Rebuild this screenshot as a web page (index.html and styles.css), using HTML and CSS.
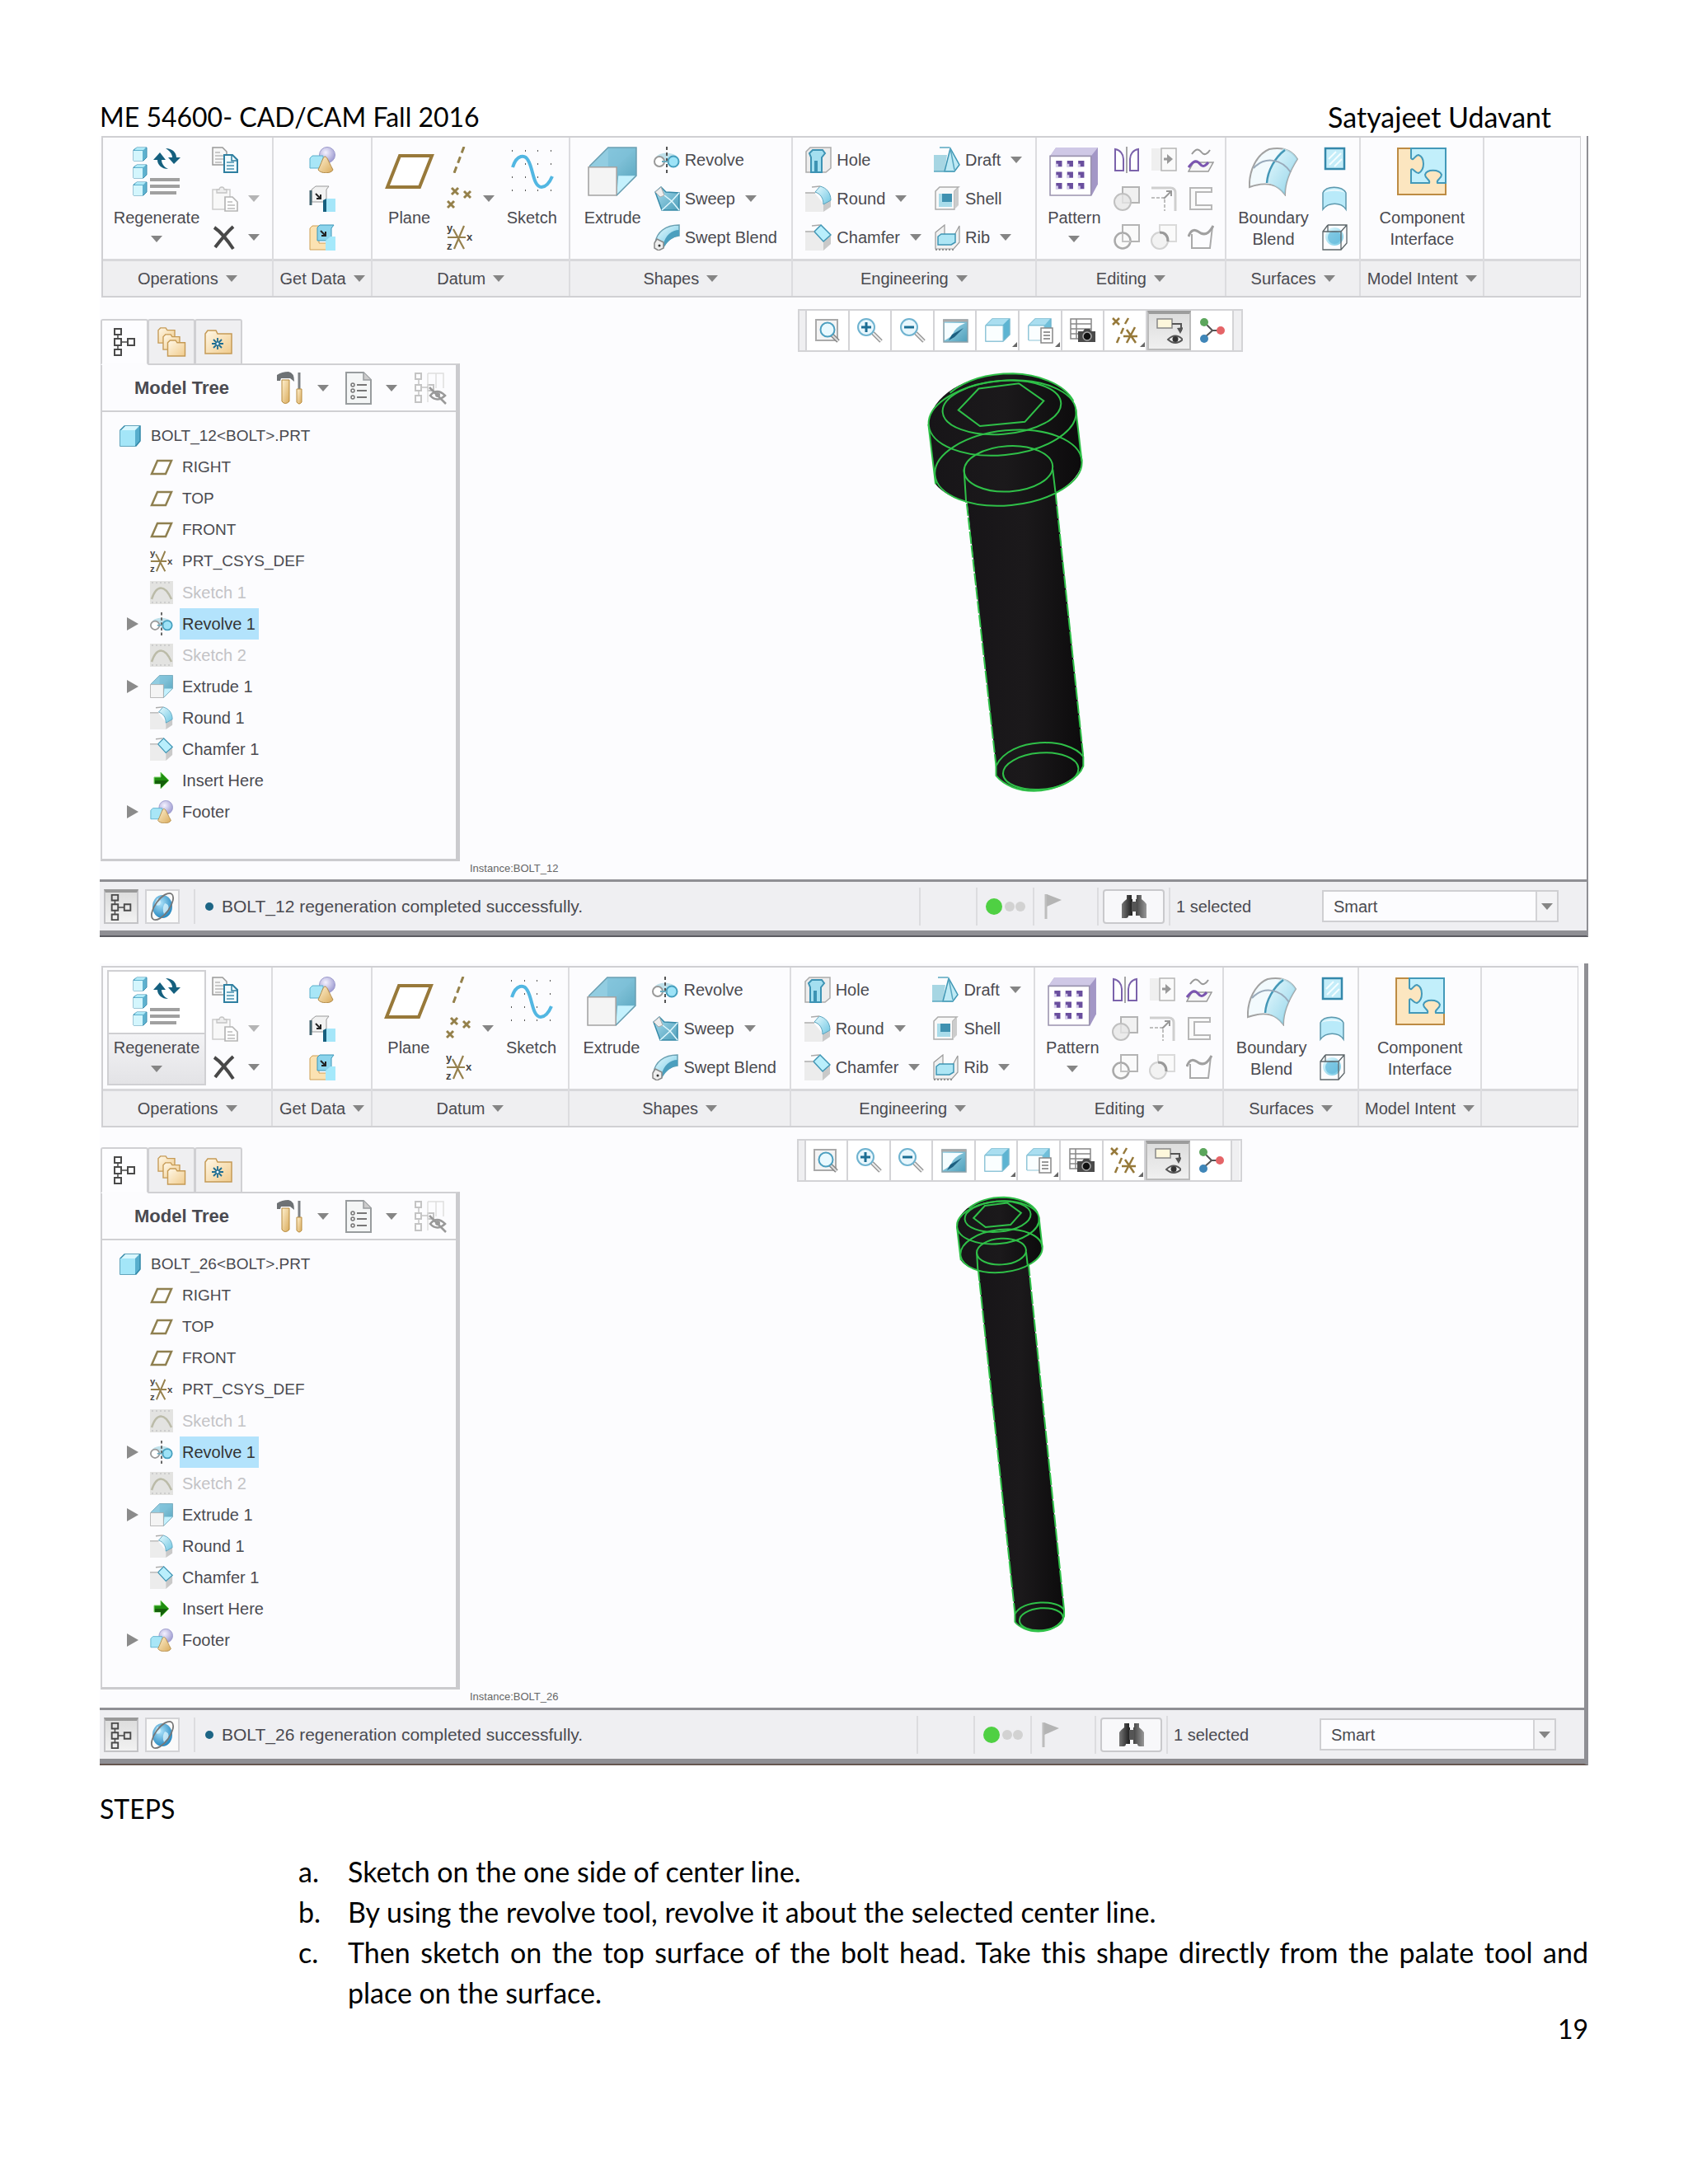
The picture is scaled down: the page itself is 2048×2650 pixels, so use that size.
FILE: index.html
```html
<!DOCTYPE html>
<html lang="en">
<head>
<meta charset="utf-8">
<title>ME 54600 - CAD/CAM Fall 2016</title>
<link rel="stylesheet" href="styles.css">
</head>
<body>
<svg class="sprite" width="0" height="0" aria-hidden="true">
  <defs>
    <linearGradient id="g-blue" x1="0" y1="0" x2="1" y2="1"><stop offset="0" stop-color="#e8fbff"/><stop offset="1" stop-color="#6fc6e2"/></linearGradient>
    <linearGradient id="g-teal" x1="0" y1="0" x2="1" y2="1"><stop offset="0" stop-color="#a9def0"/><stop offset="1" stop-color="#4f9fba"/></linearGradient>
    <linearGradient id="g-gold" x1="0" y1="0" x2="1" y2="1"><stop offset="0" stop-color="#fff0cf"/><stop offset="1" stop-color="#d9ab5c"/></linearGradient>
    <linearGradient id="g-folder" x1="0" y1="0" x2="1" y2="1"><stop offset="0" stop-color="#fff8e8"/><stop offset="1" stop-color="#f0cb8c"/></linearGradient>
    <linearGradient id="g-shaft" x1="0" y1="0" x2="1" y2="0"><stop offset="0" stop-color="#171518"/><stop offset=".5" stop-color="#1b191b"/><stop offset="1" stop-color="#0c0b0c"/></linearGradient>
    <radialGradient id="g-ball" cx=".4" cy=".35" r=".7"><stop offset="0" stop-color="#f4f2ff"/><stop offset="1" stop-color="#9a97cf"/></radialGradient>
    <radialGradient id="g-globe" cx=".4" cy=".35" r=".7"><stop offset="0" stop-color="#aee4fb"/><stop offset="1" stop-color="#1f83bd"/></radialGradient>
    <linearGradient id="g-steel" x1="0" y1="0" x2="1" y2="0"><stop offset="0" stop-color="#777"/><stop offset=".4" stop-color="#222"/><stop offset="1" stop-color="#999"/></linearGradient>
  </defs>

  <symbol id="caret" viewBox="0 0 14 8"><path d="M0 0H14L7 8Z" fill="#858585"/></symbol>
  <symbol id="expand" viewBox="0 0 14 16"><path d="M0 0L14 8L0 16Z" fill="#8b8b8b"/></symbol>

  <symbol id="cubelet" viewBox="0 0 18 18"><path d="M1 4L5 1H17V13L13 17H1Z" fill="#5fb2cf" stroke="#3d8fb0"/><path d="M1 5H12V17H1Z" fill="#d4f6fd"/><path d="M2 4L5 1H16L13 4Z" fill="#aee9f7"/></symbol>
  <symbol id="regen" viewBox="0 0 58 60">
    <use href="#cubelet" width="18" height="18"/><use href="#cubelet" y="21" width="18" height="18"/><use href="#cubelet" y="42" width="18" height="18"/>
    <path d="M40 2C48 2 53 7 53 13H58L50 21L43 13H48C48 9 45 5 40 2ZM43 27C35 27 30 22 30 16H25L33 7L40 16H35C35 20 38 25 43 27Z" fill="#15607f"/>
    <path d="M21 40H57M21 48H57M21 56H53" stroke="#a0a0a0" stroke-width="4"/>
  </symbol>
  <symbol id="copy" viewBox="0 0 32 32"><path d="M1 1H13L18 6V22H1Z" fill="#f7f7f7" stroke="#999" stroke-width="1.5"/><path d="M4 7H10M4 11H14M4 15H14M4 19H12" stroke="#bbb" stroke-width="1.5"/><path d="M15 10H25L31 16V31H15Z" fill="#effbff" stroke="#2f7fa0" stroke-width="2"/><path d="M24 10V17H31" fill="none" stroke="#2f7fa0" stroke-width="1.5"/><path d="M18 19H27M18 23H27M18 27H27" stroke="#4b93b0" stroke-width="1.5"/></symbol>
  <symbol id="paste" viewBox="0 0 32 32"><path d="M1 5H22V29H1Z" fill="#f8f8f8" stroke="#ccc" stroke-width="1.5"/><path d="M6 9V5H9C9 1 15 1 15 5H18V9Z" fill="#eee" stroke="#c4c4c4" stroke-width="1.3"/><path d="M16 14H25L31 20V31H16Z" fill="#fff" stroke="#b5b5b5" stroke-width="1.7"/><path d="M19 20H25M19 24H28M19 28H28" stroke="#bbb" stroke-width="1.5"/></symbol>
  <symbol id="delete" viewBox="0 0 32 32"><path d="M3 4C9 8 18 18 26 30M26 3C18 10 11 19 4 28" fill="none" stroke="#484848" stroke-width="4"/></symbol>
  <symbol id="shapes3" viewBox="0 0 32 32"><circle cx="22" cy="10" r="9.5" fill="url(#g-ball)" stroke="#9c9acb"/><path d="M1 14L4 11H17V26H1Z" fill="#a8e6f7" stroke="#5ab0cd"/><path d="M19 12C22 12 22 15 29 28C27 33 14 33 11 28C15 20 17 12 19 12Z" fill="url(#g-gold)" stroke="#b18a48"/></symbol>
  <symbol id="getmerge" viewBox="0 0 32 32"><path d="M3 5L8 1H24L21 5V20H3Z" fill="#f2f2f2" stroke="#999"/><path d="M2 6V24" stroke="#42636f" stroke-width="3"/><path d="M8 10L14 16M14 11V16H9" fill="none" stroke="#222" stroke-width="2"/><path d="M17 18L21 16V32H17Z" fill="#17607f"/><path d="M21 16H32V32H21Z" fill="#a5e6f9"/></symbol>
  <symbol id="getcopy" viewBox="0 0 32 32"><path d="M1 5L4 2H12V23H21V31H1Z" fill="#fbe2b2" stroke="#cf9f55"/><path d="M10 4L13 1H30L27 5V20H10Z" fill="#8cd4ec" stroke="#3b96b8"/><path d="M14 8L20 14M20 9V14H15" fill="none" stroke="#222" stroke-width="2"/><path d="M20 20L26 15L32 15V32H20Z" fill="#a5e9fb"/></symbol>
  <symbol id="plane" viewBox="0 0 58 42"><path d="M17 2H56L41 40H2Z" fill="#fff" stroke="#98793a" stroke-width="4"/></symbol>
  <symbol id="axis" viewBox="0 0 32 32"><path d="M21 0L9 32" stroke="#94804a" stroke-width="3" stroke-dasharray="8 5"/></symbol>
  <symbol id="points" viewBox="0 0 32 32"><path d="M6 3L14 11M14 3L6 11M21 7L29 15M29 7L21 15M1 19L9 27M9 19L1 27" stroke="#94804a" stroke-width="3"/></symbol>
  <symbol id="csys" viewBox="0 0 32 32"><path d="M1 16H23M8 6L21 30M21 2L9 30" stroke="#96814d" stroke-width="2.2"/></symbol>
  <symbol id="sketch" viewBox="0 0 52 52"><path d="M2 2H3M18 2H19M33 2H34M49 2H50M18 18H19M33 18H34M49 18H50M2 34H3M18 34H19M33 34H34M2 50H3M18 50H19M33 50H34M49 50H50" stroke="#555" stroke-width="2"/><path d="M3 22C8 6 18 6 22 14C28 24 28 46 38 46C44 46 48 40 51 33" fill="none" stroke="#52b7e2" stroke-width="4"/></symbol>
  <symbol id="extrude" viewBox="0 0 58 58"><path d="M1 24L24 1H57V34L34 57Z" fill="url(#g-teal)"/><path d="M2 23L24 1V24Z" fill="#c2eaf6"/><path d="M24 1H57L34 24H2Z" fill="#7dc1d8" opacity=".7"/><path d="M34 57L57 34H36Z" fill="#c4f1fd"/><path d="M1 24H34V57H1Z" fill="#f4f4f4" stroke="#a2a2a2" stroke-width="1.5"/><path d="M2 23L24 1H57V34L34 57" fill="none" stroke="#6a9fb2" stroke-width="1.5"/></symbol>
  <symbol id="revolve" viewBox="0 0 32 32"><path d="M3 13C6 6 25 6 29 13L25 17H8Z" fill="#bfe0ea"/><circle cx="7" cy="18" r="6" fill="#fff" stroke="#999" stroke-width="2"/><circle cx="24" cy="18" r="6.500" fill="#9de3f7" stroke="#459fbe" stroke-width="2"/><path d="M16 0V32" stroke="#555" stroke-width="2" stroke-dasharray="4 3"/><path d="M10 18H19" stroke="#6aa9bd" stroke-width="2"/></symbol>
  <symbol id="sweep" viewBox="0 0 32 32"><path d="M2 8L9 2L15 8L31 9V30H10Z" fill="url(#g-teal)" stroke="#378aa8" stroke-width="1.5"/><path d="M2 8L9 2L13 12L8 14Z" fill="#eee" stroke="#aaa"/><path d="M13 12L22 19L31 9M22 19L10 30M22 19L31 30" fill="none" stroke="#dff7fd" stroke-width="1.5"/></symbol>
  <symbol id="swept" viewBox="0 0 32 32"><path d="M2 22C4 10 14 1 31 1V14C22 15 16 20 12 28Z" fill="url(#g-blue)" stroke="#6aa0b2" stroke-width="1.5"/><path d="M12 24C14 14 22 7 31 7V14C22 16 18 20 12 28Z" fill="#4b9fbe"/><path d="M4 18L12 22V29L6 32L1 29V23Z" fill="#eee" stroke="#888" stroke-width="1.5"/><circle cx="7" cy="26" r="1.500" fill="#333"/></symbol>
  <symbol id="hole" viewBox="0 0 32 32"><path d="M1 6L6 1H31V26L25 31H1Z" fill="#ededed" stroke="#aaa" stroke-width="1.5"/><path d="M7 31V13L5 8L9 4H21L24 8L20 13V31H14V18H12V31Z" fill="#a4dff0" stroke="#3d93b4" stroke-width="2"/></symbol>
  <symbol id="round" viewBox="0 0 32 32"><path d="M0 10H12L22 22V32H0Z" fill="#ececec"/><path d="M22 22L31 18V26L22 32Z" fill="#c9c9c9"/><path d="M12 8L18 1C26 3 31 9 31 18L22 23C22 15 18 10 12 8Z" fill="url(#g-blue)" stroke="#5aa4bf"/><path d="M0 9H12M8 2L18 1" stroke="#aaa" stroke-width="1.5"/></symbol>
  <symbol id="chamfer" viewBox="0 0 32 32"><path d="M0 10H12L22 22V32H0Z" fill="#ececec"/><path d="M22 21L31 13V24L22 32Z" fill="#c9c9c9"/><path d="M11 9L19 1L31 13L22 21Z" fill="#b9effc" stroke="#4196b5" stroke-width="1.5"/><path d="M0 9H11M8 2L18 1" stroke="#aaa" stroke-width="1.5"/></symbol>
  <symbol id="draft" viewBox="0 0 32 32"><path d="M0 10H16L13 30H0Z" fill="#a7d6e3"/><path d="M13 30L20 2L31 22L25 30Z" fill="#bfeaf5" stroke="#3e96b4" stroke-width="1.500"/><path d="M0 30H25M20 2L25 28M7 1H19" fill="none" stroke="#58a6c0" stroke-width="1.500"/></symbol>
  <symbol id="shell" viewBox="0 0 32 32"><path d="M2 7L7 2H30L25 7V29H2Z" fill="#f8f8f8" stroke="#aaa" stroke-width="1.5"/><path d="M25 7L30 2V24L25 29Z" fill="#ccc"/><path d="M6 10H22V26H6Z" fill="#a9dcea"/><path d="M10 10H22V20H10Z" fill="#3f91b0"/></symbol>
  <symbol id="rib" viewBox="0 0 32 32"><path d="M2 10L13 1V13L25 13L31 2V22L24 30H2Z" fill="#f1f1f1" stroke="#999" stroke-width="1.200"/><path d="M5 25V15L9 12H26V22L21 25Z" fill="#aee6f5" stroke="#3f95b4" stroke-width="1.500"/><path d="M2 31H24" stroke="#777" stroke-width="1.500" stroke-dasharray="2 2"/></symbol>
  <symbol id="pattern" viewBox="0 0 58 58"><path d="M1 11L8 1H57V44L50 57H1Z" fill="#a397c6"/><path d="M1 11L8 1H57L49 11Z" fill="#cfc8e6"/><path d="M1 11H49V57H1Z" fill="#fff" stroke="#9a93ae" stroke-width="1.5"/><path d="M8 20H15M21 20H28M34 20H41M8 33H15M21 33H28M34 33H41M8 46H15M21 46H28M34 46H41" stroke="#6a4f9e" stroke-width="7"/><path d="M9 20V24M22 20V24M35 20V24M9 33V37M22 33V37M35 33V37M9 46V50M22 46V50M35 46V50" stroke="#d6cdec" stroke-width="3"/></symbol>
  <symbol id="mirror" viewBox="0 0 32 32"><path d="M2 3C8 4 12 9 12 15V29H2ZM30 3C24 4 20 9 20 15V29H30Z" fill="#fff" stroke="#7b62ab" stroke-width="2"/><path d="M16 0V32" stroke="#888" stroke-width="1.500"/></symbol>
  <symbol id="extend" viewBox="0 0 32 32"><path d="M1 2H13V29H1Z" fill="#efefef"/><path d="M13 2H31V29H13Z" fill="#fafafa" stroke="#b5b5b5" stroke-width="1.5"/><path d="M16 15H25" stroke="#999" stroke-width="3"/><path d="M20 9L27 15L20 21Z" fill="#999"/></symbol>
  <symbol id="project" viewBox="0 0 32 32"><path d="M5 9C10 2 13 2 17 7C20 11 24 9 27 4" fill="none" stroke="#999" stroke-width="2"/><path d="M7 19H31L25 30H1Z" fill="#f6f6f6" stroke="#999" stroke-width="1.5"/><path d="M1 25C8 16 11 16 15 21C18 25 21 24 25 19" fill="none" stroke="#7b55b0" stroke-width="3"/></symbol>
  <symbol id="merge" viewBox="0 0 32 32"><path d="M11 2H31V21H11Z" fill="#f1f1f1" stroke="#b4b4b4" stroke-width="2"/><circle cx="11" cy="20" r="10" fill="#e6e6e6" fill-opacity=".8" stroke="#c0c0c0" stroke-width="2"/></symbol>
  <symbol id="trim" viewBox="0 0 32 32"><path d="M1 3H24Q30 3 30 9V31" fill="none" stroke="#cfcfcf" stroke-width="3"/><path d="M1 15H17V31" fill="none" stroke="#aaa" stroke-width="1.500" stroke-dasharray="4 2"/><path d="M16 16L25 7M19 7H25V13" fill="none" stroke="#999" stroke-width="2"/></symbol>
  <symbol id="offset" viewBox="0 0 32 32"><path d="M3 3H29V8H10V24H29V29H3Z" fill="#fafafa" stroke="#b8b8b8" stroke-width="2"/></symbol>
  <symbol id="intersect" viewBox="0 0 32 32"><path d="M11 1H31V21H11Z" fill="#fafafa" stroke="#b4b4b4" stroke-width="2"/><circle cx="11" cy="20" r="9.500" fill="#fafafa" stroke="#aaa" stroke-width="2.500"/><path d="M11 11V21H21" fill="none" stroke="#c4c4c4" stroke-width="2"/></symbol>
  <symbol id="solidify" viewBox="0 0 32 32"><path d="M11 1H31V21H11Z" fill="#fafafa" stroke="#dadada" stroke-width="2"/><circle cx="11" cy="20" r="10" fill="#f2f2f2" stroke="#d2d2d2" stroke-width="2"/><path d="M11 10Q21 10 21 21" fill="none" stroke="#999" stroke-width="3"/></symbol>
  <symbol id="thicken" viewBox="0 0 32 32"><path d="M5 12V29H27L30 3" fill="none" stroke="#aaa" stroke-width="2"/><path d="M1 15C5 3 11 8 16 11C23 14 27 9 31 2" fill="none" stroke="#a0a0a0" stroke-width="3"/></symbol>
  <symbol id="boundary" viewBox="0 0 60 58"><path d="M1 48C0 28 10 8 25 2C35 0 50 0 59 14C50 28 44 42 44 57C36 46 24 40 1 48Z" fill="#f2fafd" stroke="#a2a2a2" stroke-width="2"/><path d="M42 1C50 3 56 8 59 14C50 28 44 42 44 57C37 49 30 44 22 43C24 24 32 10 42 1Z" fill="url(#g-blue)" opacity=".75"/><path d="M44 3C32 12 23 28 22 43" fill="none" stroke="#4497b6" stroke-width="2.5"/><path d="M6 25C20 10 40 14 51 30" fill="none" stroke="#9ab" stroke-width="2"/></symbol>
  <symbol id="fill" viewBox="0 0 32 32"><path d="M5 2H28V27H5Z" fill="#c4edf9" stroke="#3488ab" stroke-width="2.500"/><path d="M9 15L18 6M10 22L24 8M16 24L25 15" stroke="#f4fdff" stroke-width="2"/></symbol>
  <symbol id="style" viewBox="0 0 32 32"><path d="M2 29V9C6 0 25 0 30 9V29C24 20 9 20 2 29Z" fill="#b9eaf9" stroke="#5d98ad" stroke-width="1.500"/><path d="M3 9C8 3 24 3 29 9C22 6 10 6 3 9Z" fill="#e9f8fc"/></symbol>
  <symbol id="freestyle" viewBox="0 0 32 32"><circle cx="16" cy="15" r="11" fill="url(#g-blue)"/><circle cx="16" cy="16" r="8" fill="#62b9dc" opacity=".7"/><path d="M2 9H24V31H2ZM8 1H31V23L24 31M2 9L8 1M24 9L31 1M8 1V9" fill="none" stroke="#5b6468" stroke-width="1.300"/></symbol>
  <symbol id="component" viewBox="0 0 60 58"><path d="M1 1H59V57H1Z" fill="#fce6c0" stroke="#bd8b43" stroke-width="2"/><path d="M17 1H59V43H49C47 39 54 38 54 33C51 26 36 26 34 33C34 38 41 39 39 43H17V27C19 24 22 31 26 31C34 27 34 12 26 9C22 9 20 17 17 13Z" fill="#c2effb" stroke="#4399b9" stroke-width="2"/></symbol>

  <symbol id="t-tree" viewBox="0 0 28 36"><path d="M2 2H10V9H2ZM2 14H10V22H2ZM2 27H10V34H2ZM18 14H26V22H18Z" fill="none" stroke="#4a4a4a" stroke-width="2"/><path d="M6 9V14M6 22V27M10 18H18" stroke="#4a4a4a" stroke-width="1.500"/></symbol>
  <symbol id="folder" viewBox="0 0 24 22"><path d="M1 4L4 1H11L13 4H23V21H1Z" fill="url(#g-folder)" stroke="#c59a55" stroke-width="1.500"/></symbol>
  <symbol id="t-folders" viewBox="0 0 36 36"><use href="#folder" width="24" height="20"/><use href="#folder" x="6" y="8" width="24" height="20"/><use href="#folder" x="12" y="15" width="24" height="21"/></symbol>
  <symbol id="t-fav" viewBox="0 0 34 30"><path d="M1 5L4 1H14L16 5H33V29H1Z" fill="url(#g-folder)" stroke="#c59a55" stroke-width="1.500"/><path d="M16 10V24M9 17H23M11 12L21 22M21 12L11 22" stroke="#1d6d92" stroke-width="1.800"/><circle cx="16" cy="17" r="1.500" fill="#fff"/></symbol>
  <symbol id="tools" viewBox="0 0 32 40"><path d="M6 10H15V36Q10 41 6 36Z" fill="url(#g-gold)" stroke="#b88b3d"/><path d="M0 4Q6 0 14 0Q21 1 21 12L16 8H5L4 11H0Z" fill="#6e7275"/><path d="M27 1V22" stroke="#7d8184" stroke-width="3"/><path d="M24 21H30V37Q27 41 24 37Z" fill="url(#g-gold)" stroke="#b88b3d"/></symbol>
  <symbol id="listdoc" viewBox="0 0 32 40"><path d="M1 1H22L31 10V39H1Z" fill="#f4f6f6" stroke="#989c9e" stroke-width="2"/><path d="M22 1V10H31" fill="#ccc" stroke="#989c9e" stroke-width="1.500"/><path d="M14 16H26M14 23H26M14 31H26" stroke="#777" stroke-width="2"/><g fill="none" stroke="#777" stroke-width="1.500"><circle cx="9" cy="16" r="2"/><circle cx="9" cy="23" r="2"/><circle cx="9" cy="31" r="2"/></g></symbol>
  <symbol id="treefilter" viewBox="0 0 40 40"><path d="M2 2H9V9H2ZM2 16H9V23H2ZM2 29H9V37H2ZM17 16H24V23H17Z" fill="none" stroke="#c4c4c4" stroke-width="2"/><path d="M17 2V37M17 2H36V20M27 2V20" fill="none" stroke="#dedede" stroke-width="1.500"/><path d="M6 9V16M6 23V29M9 19H17" stroke="#c4c4c4" stroke-width="1.500"/><path d="M20 29Q28 19 38 29Q28 38 20 29ZM19 19L39 39" fill="none" stroke="#999" stroke-width="2.500"/><circle cx="29" cy="28" r="3" fill="#999"/></symbol>

  <symbol id="part" viewBox="0 0 28 28"><path d="M2 7L7 2H26V20L21 26H2Z" fill="#57aecd" stroke="#2f86a6" stroke-width="1.500"/><path d="M2 7H20V26H2Z" fill="#a4e6f8"/><path d="M3 7L8 2H25L20 7Z" fill="#d9f7fe"/></symbol>
  <symbol id="t-plane" viewBox="0 0 28 28"><path d="M9 6H26L19 22H2Z" fill="#fff" stroke="#8f8050" stroke-width="2.500"/></symbol>
  <symbol id="t-sketch" viewBox="0 0 28 28"><path d="M0 0H28V28H0Z" fill="#e3e3e1"/><path d="M2 22C8 4 18 4 26 22" fill="none" stroke="#bbbba8" stroke-width="2.500"/><path d="M2 2H27M2 26H27" stroke="#c6c6c6" stroke-width="1.500" stroke-dasharray="2 3"/></symbol>
  <symbol id="insert" viewBox="0 0 28 28"><path d="M5 10H13V4L23 14L13 24V18H5Z" fill="#1f8f10" stroke="#7fd36c"/><path d="M6 14H22L13 23V18H6Z" fill="#155f0b"/></symbol>

  <symbol id="refit" viewBox="0 0 32 32"><path d="M2 3H28V28H2Z" fill="#f4f4f4" stroke="#aaa" stroke-width="2"/><path d="M20 20L29 29" stroke="#888" stroke-width="5"/><path d="M20 20L29 29" stroke="#ddd" stroke-width="2"/><circle cx="16" cy="15" r="8.500" fill="#e9f9ff" stroke="#4c9fc0" stroke-width="2"/></symbol>
  <symbol id="zoomin" viewBox="0 0 32 32"><path d="M20 19L30 29" stroke="#999" stroke-width="5"/><path d="M20 19L30 29" stroke="#eee" stroke-width="2"/><circle cx="12" cy="12" r="10" fill="#e9f7fd" stroke="#6fb3d0" stroke-width="2"/><path d="M12 6V18M6 12H18" stroke="#1c6e94" stroke-width="3"/></symbol>
  <symbol id="zoomout" viewBox="0 0 32 32"><path d="M20 19L30 29" stroke="#999" stroke-width="5"/><path d="M20 19L30 29" stroke="#eee" stroke-width="2"/><circle cx="12" cy="12" r="10" fill="#e9f7fd" stroke="#6fb3d0" stroke-width="2"/><path d="M6 12H18" stroke="#1c6e94" stroke-width="3"/></symbol>
  <symbol id="repaint" viewBox="0 0 32 32"><path d="M2 3H31V30H2Z" fill="url(#g-teal)" stroke="#8ea3ab" stroke-width="1.500"/><path d="M3 7H28Q16 12 13 20Q11 24 3 28Z" fill="#f5fdff"/><path d="M1 4H31" stroke="#a9a9a9" stroke-width="3"/><path d="M26 13L15 24L8 28L12 21Z" fill="#1d5f80"/></symbol>
  <symbol id="display" viewBox="0 0 32 32"><path d="M2 10L10 2H31V21L23 29H2Z" fill="#5db4d2" stroke="#72b7ce" stroke-width="1.500"/><path d="M2 10H23V29H2Z" fill="#fafeff" stroke="#8fc5d7"/><path d="M3 9L10 2H30L23 9Z" fill="#a9def0"/></symbol>
  <symbol id="saved" viewBox="0 0 32 32"><path d="M2 10L10 2H29V16L22 27H2Z" fill="#6fbfda" stroke="#72b7ce" stroke-width="1.500"/><path d="M2 10H21V28H2Z" fill="#fafeff" stroke="#8fc5d7"/><path d="M3 9L10 2H28L22 9Z" fill="#a9def0"/><path d="M17 13H31V31H17Z" fill="#fff" stroke="#888" stroke-width="1.500"/><path d="M20 18H28M20 22H28M20 26H28" stroke="#777" stroke-width="1.500"/></symbol>
  <symbol id="views" viewBox="0 0 32 32"><path d="M2 2H27V26H2ZM2 8H27M2 14H27M2 20H27M9 2V26" fill="#fff" stroke="#888" stroke-width="1.500"/><path d="M11 17H17L19 14H25L27 17H32V30H11Z" fill="#4a4a4a"/><circle cx="22" cy="23" r="5" fill="#111" stroke="#aaa" stroke-width="1.500"/></symbol>
  <symbol id="datumdisp" viewBox="0 0 32 32"><path d="M1 1L9 9M9 1L1 9M20 1L16 8M14 13L11 20M9 24L6 31M14 23H31M18 15L29 31M28 12L18 31" stroke="#96793a" stroke-width="2.500"/></symbol>
  <symbol id="annot" viewBox="0 0 32 32"><path d="M1 1H19V12H1Z" fill="#fdf7dc" stroke="#888" stroke-width="1.500"/><path d="M19 7H30V16" fill="none" stroke="#555" stroke-width="2"/><path d="M25 12L33 11L29 19Z" fill="#555"/><path d="M14 26Q23 17 32 26Q23 34 14 26Z" fill="#eee" stroke="#555" stroke-width="1.800"/><circle cx="23" cy="25.500" r="3.500" fill="#333"/></symbol>
  <symbol id="spin" viewBox="0 0 32 32"><path d="M7 6L17 16M17 16H27M17 16L7 25" stroke="#555" stroke-width="2"/><circle cx="7" cy="6" r="5" fill="#5ca65c"/><circle cx="27" cy="16" r="5" fill="#e56467"/><circle cx="7" cy="26" r="5" fill="#3f86b8"/></symbol>

  <symbol id="globe" viewBox="0 0 32 36"><ellipse cx="16" cy="18" rx="12" ry="14" fill="url(#g-globe)"/><path d="M10 8Q16 10 13 16Q8 18 7 14ZM19 14Q25 15 23 22L18 27Q15 20 19 14Z" fill="#dff5fd" opacity=".75"/><ellipse cx="16" cy="18" rx="19" ry="8.500" transform="rotate(-54 16 18)" fill="none" stroke="#777" stroke-width="1.800"/></symbol>
  <symbol id="lights" viewBox="0 0 50 24"><circle cx="11" cy="12" r="10" fill="#4fd043"/><circle cx="30" cy="12" r="6" fill="#d2d2d2"/><circle cx="43" cy="12" r="6" fill="#d2d2d2"/></symbol>
  <symbol id="flag" viewBox="0 0 22 32"><path d="M2 1V31" stroke="#bdbdbd" stroke-width="3"/><path d="M3 1L21 8L3 16Z" fill="#b4b4b4"/></symbol>
  <symbol id="binoc" viewBox="0 0 32 30"><path d="M7 1H13V6H14V26H9Q9 29 6 29H1V12Q3 9 7 6ZM19 1H25V6Q29 9 31 12V29H26Q23 29 23 26H18V6H19Z" fill="url(#g-steel)"/><path d="M13 9H19V21H13Z" fill="#555"/></symbol>

  <symbol id="bolt-head" viewBox="480 225 530 430" overflow="visible">
    <path class="body" d="M488 392C500 290 640 235 770 236C880 236 975 290 980 345L1000 505C1000 560 900 642 720 642C600 642 530 600 512 575Z"/>
    <g class="edges">
      <path d="M488 392L512 575M980 345L1000 505M607 530L614 632M903 530L912 600M560 295C620 250 700 236 770 236C850 238 940 265 972 320"/>
      <ellipse cx="735" cy="372" rx="247" ry="114" transform="rotate(-5 735 372)"/>
      <ellipse cx="733" cy="340" rx="198" ry="82" transform="rotate(-4 733 340)"/>
      <path d="M656 282L790 266L873 320L810 384L660 397L588 348Z"/>
      <ellipse cx="755" cy="525" rx="246" ry="115" transform="rotate(-5 755 525)"/>
      <ellipse cx="755" cy="528" rx="148" ry="70" transform="rotate(-3 755 528)"/>
    </g>
  </symbol>
</svg>

<div class="page">
  <header class="running-head"><span>ME 54600- CAD/CAM Fall 2016</span><span class="author">Satyajeet Udavant</span></header>

  <main>
  <section class="app" aria-label="BOLT_12 model">
    <div class="ribbon">
      <div class="group"><div class="tools start">
        <button class="big wide"><svg class="art"><use href="#regen"/></svg><span>Regenerate</span><svg class="caret"><use href="#caret"/></svg></button>
        <div class="stack tight">
          <button class="small" aria-label="Copy"><svg class="ico"><use href="#copy"/></svg></button>
          <button class="small off" aria-label="Paste"><svg class="ico"><use href="#paste"/></svg><svg class="caret"><use href="#caret"/></svg></button>
          <button class="small" aria-label="Delete"><svg class="ico"><use href="#delete"/></svg><svg class="caret"><use href="#caret"/></svg></button>
        </div></div><button class="title">Operations<svg class="caret"><use href="#caret"/></svg></button></div>
      <div class="group"><div class="tools">
        <div class="stack">
          <button class="small" aria-label="User-defined feature"><svg class="ico"><use href="#shapes3"/></svg></button>
          <button class="small" aria-label="Copy geometry"><svg class="ico"><use href="#getmerge"/></svg></button>
          <button class="small" aria-label="Shrinkwrap"><svg class="ico"><use href="#getcopy"/></svg></button>
        </div></div><button class="title">Get Data<svg class="caret"><use href="#caret"/></svg></button></div>
      <div class="group"><div class="tools">
        <button class="big"><svg class="art"><use href="#plane" y="9" height="42"/></svg><span>Plane</span></button>
        <div class="stack">
          <button class="small" aria-label="Axis"><svg class="ico"><use href="#axis"/></svg></button>
          <button class="small" aria-label="Point"><svg class="ico"><use href="#points"/></svg><svg class="caret"><use href="#caret"/></svg></button>
          <button class="small" aria-label="Coordinate system"><svg class="ico" viewBox="0 0 32 32"><use href="#csys"/><g class="axis-letter"><text x="0" y="9">y</text><text x="24" y="20">x</text><text x="0" y="31">z</text></g></svg></button>
        </div>
        <button class="big"><svg class="art"><use href="#sketch" y="3" height="52"/></svg><span>Sketch</span></button>
      </div><button class="title">Datum<svg class="caret"><use href="#caret"/></svg></button></div>
      <div class="group"><div class="tools">
        <button class="big"><svg class="art"><use href="#extrude"/></svg><span>Extrude</span></button>
        <div class="stack">
          <button class="small"><svg class="ico"><use href="#revolve"/></svg>Revolve</button>
          <button class="small"><svg class="ico"><use href="#sweep"/></svg>Sweep<svg class="caret"><use href="#caret"/></svg></button>
          <button class="small"><svg class="ico"><use href="#swept"/></svg>Swept Blend</button>
        </div></div><button class="title">Shapes<svg class="caret"><use href="#caret"/></svg></button></div>
      <div class="group"><div class="tools">
        <div class="stack">
          <button class="small"><svg class="ico"><use href="#hole"/></svg>Hole</button>
          <button class="small"><svg class="ico"><use href="#round"/></svg>Round<svg class="caret"><use href="#caret"/></svg></button>
          <button class="small"><svg class="ico"><use href="#chamfer"/></svg>Chamfer<svg class="caret"><use href="#caret"/></svg></button>
        </div>
        <div class="stack">
          <button class="small"><svg class="ico"><use href="#draft"/></svg>Draft<svg class="caret"><use href="#caret"/></svg></button>
          <button class="small"><svg class="ico"><use href="#shell"/></svg>Shell</button>
          <button class="small"><svg class="ico"><use href="#rib"/></svg>Rib<svg class="caret"><use href="#caret"/></svg></button>
        </div></div><button class="title">Engineering<svg class="caret"><use href="#caret"/></svg></button></div>
      <div class="group"><div class="tools">
        <button class="big"><svg class="art"><use href="#pattern"/></svg><span>Pattern</span><svg class="caret"><use href="#caret"/></svg></button>
        <div class="stack three">
          <button class="small" aria-label="Mirror"><svg class="ico"><use href="#mirror"/></svg></button>
          <button class="small" aria-label="Extend"><svg class="ico"><use href="#extend"/></svg></button>
          <button class="small" aria-label="Project"><svg class="ico"><use href="#project"/></svg></button>
          <button class="small" aria-label="Merge"><svg class="ico"><use href="#merge"/></svg></button>
          <button class="small" aria-label="Trim"><svg class="ico"><use href="#trim"/></svg></button>
          <button class="small" aria-label="Offset"><svg class="ico"><use href="#offset"/></svg></button>
          <button class="small" aria-label="Intersect"><svg class="ico"><use href="#intersect"/></svg></button>
          <button class="small" aria-label="Solidify"><svg class="ico"><use href="#solidify"/></svg></button>
          <button class="small" aria-label="Thicken"><svg class="ico"><use href="#thicken"/></svg></button>
        </div></div><button class="title">Editing<svg class="caret"><use href="#caret"/></svg></button></div>
      <div class="group"><div class="tools">
        <button class="big"><svg class="art"><use href="#boundary"/></svg><span>Boundary<br>Blend</span></button>
        <div class="stack">
          <button class="small" aria-label="Fill"><svg class="ico"><use href="#fill"/></svg></button>
          <button class="small" aria-label="Style"><svg class="ico"><use href="#style"/></svg></button>
          <button class="small" aria-label="Freestyle"><svg class="ico"><use href="#freestyle"/></svg></button>
        </div></div><button class="title">Surfaces<svg class="caret"><use href="#caret"/></svg></button></div>
      <div class="group"><div class="tools">
        <button class="big"><svg class="art"><use href="#component"/></svg><span>Component<br>Interface</span></button>
      </div><button class="title">Model Intent<svg class="caret"><use href="#caret"/></svg></button></div>
      <div class="group"><div class="tools"></div><div class="title"></div></div>
    </div>

    <div class="workspace">
      <aside class="navigator">
        <div class="tabs">
          <button class="tab active" aria-label="Model tree"><svg width="28" height="36"><use href="#t-tree"/></svg></button>
          <button class="tab" aria-label="Folders"><svg width="36" height="36"><use href="#t-folders"/></svg></button>
          <button class="tab" aria-label="Favorites"><svg width="34" height="30"><use href="#t-fav"/></svg></button>
        </div>
        <div class="panel">
          <div class="panel-head"><h2>Model Tree</h2>
            <button class="drop" aria-label="Settings"><svg width="32" height="40"><use href="#tools"/></svg><svg class="caret"><use href="#caret"/></svg></button>
            <button class="drop" aria-label="Show"><svg width="32" height="40"><use href="#listdoc"/></svg><svg class="caret"><use href="#caret"/></svg></button>
            <button class="drop" aria-label="Tree filter"><svg width="40" height="40"><use href="#treefilter"/></svg></button>
          </div>
          <ul class="tree">
            <li class="root"><svg class="node"><use href="#part"/></svg><span>BOLT_12&lt;BOLT&gt;.PRT</span></li>
            <li class="datum"><svg class="node"><use href="#t-plane"/></svg><span>RIGHT</span></li>
            <li class="datum"><svg class="node"><use href="#t-plane"/></svg><span>TOP</span></li>
            <li class="datum"><svg class="node"><use href="#t-plane"/></svg><span>FRONT</span></li>
            <li class="datum"><svg class="node" viewBox="0 0 32 32"><use href="#csys"/><g class="axis-letter"><text x="0" y="9">y</text><text x="24" y="20">x</text><text x="0" y="31">z</text></g></svg><span>PRT_CSYS_DEF</span></li>
            <li class="hidden-item"><svg class="node"><use href="#t-sketch"/></svg><span>Sketch 1</span></li>
            <li class="selected"><svg class="expand"><use href="#expand"/></svg><svg class="node"><use href="#revolve"/></svg><span>Revolve 1</span></li>
            <li class="hidden-item"><svg class="node"><use href="#t-sketch"/></svg><span>Sketch 2</span></li>
            <li><svg class="expand"><use href="#expand"/></svg><svg class="node"><use href="#extrude"/></svg><span>Extrude 1</span></li>
            <li><svg class="node"><use href="#round"/></svg><span>Round 1</span></li>
            <li><svg class="node"><use href="#chamfer"/></svg><span>Chamfer 1</span></li>
            <li><svg class="node"><use href="#insert"/></svg><span>Insert Here</span></li>
            <li><svg class="expand"><use href="#expand"/></svg><svg class="node"><use href="#shapes3"/></svg><span>Footer</span></li>
          </ul>
        </div>
      </aside>
      <div class="viewport">
        <div class="viewbar">
          <i class="grip"></i>
          <button aria-label="Refit"><svg class="ico"><use href="#refit"/></svg></button>
          <button aria-label="Zoom in"><svg class="ico"><use href="#zoomin"/></svg></button>
          <button aria-label="Zoom out"><svg class="ico"><use href="#zoomout"/></svg></button>
          <button aria-label="Repaint"><svg class="ico"><use href="#repaint"/></svg></button>
          <button class="more" aria-label="Display style"><svg class="ico"><use href="#display"/></svg></button>
          <button class="more" aria-label="Saved orientations"><svg class="ico"><use href="#saved"/></svg></button>
          <button aria-label="View manager"><svg class="ico"><use href="#views"/></svg></button>
          <button class="more" aria-label="Datum display"><svg class="ico"><use href="#datumdisp"/></svg></button>
          <button class="pressed" aria-label="Annotation display"><svg class="ico"><use href="#annot"/></svg></button>
          <button aria-label="Spin center"><svg class="ico"><use href="#spin"/></svg></button>
          <i class="grip"></i>
        </div>
        <svg class="model" viewBox="19 67 540 560" role="img" aria-label="Short socket head bolt">
          <g transform="scale(.3635 .3954)">
            <path class="body" d="M614 600L714 1440V1470C740 1500 790 1517 840 1517C920 1515 990 1480 1006 1440V1412L912 590Z"/>
            <g class="edges">
              <path class="side" d="M616 635L714 1440M912 600L1005 1412"/>
              <path d="M714 1440C760 1350 960 1350 1005 1412V1440C990 1480 920 1515 840 1517C790 1517 740 1500 714 1470Z"/>
              <ellipse cx="863" cy="1456" rx="126" ry="56" transform="rotate(-4 863 1456)"/>
            </g>
            <use href="#bolt-head" x="480" y="225" width="530" height="430"/>
          </g>
        </svg>
        <p class="instance">Instance:BOLT_12</p>
      </div>
    </div>

    <div class="status">
      <button class="sbtn pressed" aria-label="Navigator"><svg width="28" height="34"><use href="#t-tree"/></svg></button>
      <button class="sbtn" aria-label="Browser"><svg width="32" height="36"><use href="#globe"/></svg></button>
      <p class="message">BOLT_12 regeneration completed successfully.</p>
      <span class="cell"></span>
      <span class="cell"><svg width="50" height="24"><use href="#lights"/></svg></span>
      <span class="cell flag"><svg width="22" height="32"><use href="#flag"/></svg></span>
      <span class="cell find"><button aria-label="Find"><svg width="32" height="30"><use href="#binoc"/></svg></button></span>
      <span class="cell picked">1 selected</span>
      <span class="filter"><select aria-label="Selection filter"><option>Smart</option></select><span class="arrow"><svg class="caret"><use href="#caret"/></svg></span></span>
    </div>
  </section>

  <section class="app second" aria-label="BOLT_26 model">
    <div class="ribbon">
      <div class="group"><div class="tools start">
        <button class="big wide hover"><svg class="art"><use href="#regen"/></svg><span>Regenerate</span><svg class="caret"><use href="#caret"/></svg></button>
        <div class="stack tight">
          <button class="small" aria-label="Copy"><svg class="ico"><use href="#copy"/></svg></button>
          <button class="small off" aria-label="Paste"><svg class="ico"><use href="#paste"/></svg><svg class="caret"><use href="#caret"/></svg></button>
          <button class="small" aria-label="Delete"><svg class="ico"><use href="#delete"/></svg><svg class="caret"><use href="#caret"/></svg></button>
        </div></div><button class="title">Operations<svg class="caret"><use href="#caret"/></svg></button></div>
      <div class="group"><div class="tools">
        <div class="stack">
          <button class="small" aria-label="User-defined feature"><svg class="ico"><use href="#shapes3"/></svg></button>
          <button class="small" aria-label="Copy geometry"><svg class="ico"><use href="#getmerge"/></svg></button>
          <button class="small" aria-label="Shrinkwrap"><svg class="ico"><use href="#getcopy"/></svg></button>
        </div></div><button class="title">Get Data<svg class="caret"><use href="#caret"/></svg></button></div>
      <div class="group"><div class="tools">
        <button class="big"><svg class="art"><use href="#plane" y="9" height="42"/></svg><span>Plane</span></button>
        <div class="stack">
          <button class="small" aria-label="Axis"><svg class="ico"><use href="#axis"/></svg></button>
          <button class="small" aria-label="Point"><svg class="ico"><use href="#points"/></svg><svg class="caret"><use href="#caret"/></svg></button>
          <button class="small" aria-label="Coordinate system"><svg class="ico" viewBox="0 0 32 32"><use href="#csys"/><g class="axis-letter"><text x="0" y="9">y</text><text x="24" y="20">x</text><text x="0" y="31">z</text></g></svg></button>
        </div>
        <button class="big"><svg class="art"><use href="#sketch" y="3" height="52"/></svg><span>Sketch</span></button>
      </div><button class="title">Datum<svg class="caret"><use href="#caret"/></svg></button></div>
      <div class="group"><div class="tools">
        <button class="big"><svg class="art"><use href="#extrude"/></svg><span>Extrude</span></button>
        <div class="stack">
          <button class="small"><svg class="ico"><use href="#revolve"/></svg>Revolve</button>
          <button class="small"><svg class="ico"><use href="#sweep"/></svg>Sweep<svg class="caret"><use href="#caret"/></svg></button>
          <button class="small"><svg class="ico"><use href="#swept"/></svg>Swept Blend</button>
        </div></div><button class="title">Shapes<svg class="caret"><use href="#caret"/></svg></button></div>
      <div class="group"><div class="tools">
        <div class="stack">
          <button class="small"><svg class="ico"><use href="#hole"/></svg>Hole</button>
          <button class="small"><svg class="ico"><use href="#round"/></svg>Round<svg class="caret"><use href="#caret"/></svg></button>
          <button class="small"><svg class="ico"><use href="#chamfer"/></svg>Chamfer<svg class="caret"><use href="#caret"/></svg></button>
        </div>
        <div class="stack">
          <button class="small"><svg class="ico"><use href="#draft"/></svg>Draft<svg class="caret"><use href="#caret"/></svg></button>
          <button class="small"><svg class="ico"><use href="#shell"/></svg>Shell</button>
          <button class="small"><svg class="ico"><use href="#rib"/></svg>Rib<svg class="caret"><use href="#caret"/></svg></button>
        </div></div><button class="title">Engineering<svg class="caret"><use href="#caret"/></svg></button></div>
      <div class="group"><div class="tools">
        <button class="big"><svg class="art"><use href="#pattern"/></svg><span>Pattern</span><svg class="caret"><use href="#caret"/></svg></button>
        <div class="stack three">
          <button class="small" aria-label="Mirror"><svg class="ico"><use href="#mirror"/></svg></button>
          <button class="small" aria-label="Extend"><svg class="ico"><use href="#extend"/></svg></button>
          <button class="small" aria-label="Project"><svg class="ico"><use href="#project"/></svg></button>
          <button class="small" aria-label="Merge"><svg class="ico"><use href="#merge"/></svg></button>
          <button class="small" aria-label="Trim"><svg class="ico"><use href="#trim"/></svg></button>
          <button class="small" aria-label="Offset"><svg class="ico"><use href="#offset"/></svg></button>
          <button class="small" aria-label="Intersect"><svg class="ico"><use href="#intersect"/></svg></button>
          <button class="small" aria-label="Solidify"><svg class="ico"><use href="#solidify"/></svg></button>
          <button class="small" aria-label="Thicken"><svg class="ico"><use href="#thicken"/></svg></button>
        </div></div><button class="title">Editing<svg class="caret"><use href="#caret"/></svg></button></div>
      <div class="group"><div class="tools">
        <button class="big"><svg class="art"><use href="#boundary"/></svg><span>Boundary<br>Blend</span></button>
        <div class="stack">
          <button class="small" aria-label="Fill"><svg class="ico"><use href="#fill"/></svg></button>
          <button class="small" aria-label="Style"><svg class="ico"><use href="#style"/></svg></button>
          <button class="small" aria-label="Freestyle"><svg class="ico"><use href="#freestyle"/></svg></button>
        </div></div><button class="title">Surfaces<svg class="caret"><use href="#caret"/></svg></button></div>
      <div class="group"><div class="tools">
        <button class="big"><svg class="art"><use href="#component"/></svg><span>Component<br>Interface</span></button>
      </div><button class="title">Model Intent<svg class="caret"><use href="#caret"/></svg></button></div>
      <div class="group"><div class="tools"></div><div class="title"></div></div>
    </div>

    <div class="workspace">
      <aside class="navigator">
        <div class="tabs">
          <button class="tab active" aria-label="Model tree"><svg width="28" height="36"><use href="#t-tree"/></svg></button>
          <button class="tab" aria-label="Folders"><svg width="36" height="36"><use href="#t-folders"/></svg></button>
          <button class="tab" aria-label="Favorites"><svg width="34" height="30"><use href="#t-fav"/></svg></button>
        </div>
        <div class="panel">
          <div class="panel-head"><h2>Model Tree</h2>
            <button class="drop" aria-label="Settings"><svg width="32" height="40"><use href="#tools"/></svg><svg class="caret"><use href="#caret"/></svg></button>
            <button class="drop" aria-label="Show"><svg width="32" height="40"><use href="#listdoc"/></svg><svg class="caret"><use href="#caret"/></svg></button>
            <button class="drop" aria-label="Tree filter"><svg width="40" height="40"><use href="#treefilter"/></svg></button>
          </div>
          <ul class="tree">
            <li class="root"><svg class="node"><use href="#part"/></svg><span>BOLT_26&lt;BOLT&gt;.PRT</span></li>
            <li class="datum"><svg class="node"><use href="#t-plane"/></svg><span>RIGHT</span></li>
            <li class="datum"><svg class="node"><use href="#t-plane"/></svg><span>TOP</span></li>
            <li class="datum"><svg class="node"><use href="#t-plane"/></svg><span>FRONT</span></li>
            <li class="datum"><svg class="node" viewBox="0 0 32 32"><use href="#csys"/><g class="axis-letter"><text x="0" y="9">y</text><text x="24" y="20">x</text><text x="0" y="31">z</text></g></svg><span>PRT_CSYS_DEF</span></li>
            <li class="hidden-item"><svg class="node"><use href="#t-sketch"/></svg><span>Sketch 1</span></li>
            <li class="selected"><svg class="expand"><use href="#expand"/></svg><svg class="node"><use href="#revolve"/></svg><span>Revolve 1</span></li>
            <li class="hidden-item"><svg class="node"><use href="#t-sketch"/></svg><span>Sketch 2</span></li>
            <li><svg class="expand"><use href="#expand"/></svg><svg class="node"><use href="#extrude"/></svg><span>Extrude 1</span></li>
            <li><svg class="node"><use href="#round"/></svg><span>Round 1</span></li>
            <li><svg class="node"><use href="#chamfer"/></svg><span>Chamfer 1</span></li>
            <li><svg class="node"><use href="#insert"/></svg><span>Insert Here</span></li>
            <li><svg class="expand"><use href="#expand"/></svg><svg class="node"><use href="#shapes3"/></svg><span>Footer</span></li>
          </ul>
        </div>
      </aside>
      <div class="viewport">
        <div class="viewbar">
          <i class="grip"></i>
          <button aria-label="Refit"><svg class="ico"><use href="#refit"/></svg></button>
          <button aria-label="Zoom in"><svg class="ico"><use href="#zoomin"/></svg></button>
          <button aria-label="Zoom out"><svg class="ico"><use href="#zoomout"/></svg></button>
          <button aria-label="Repaint"><svg class="ico"><use href="#repaint"/></svg></button>
          <button class="more" aria-label="Display style"><svg class="ico"><use href="#display"/></svg></button>
          <button class="more" aria-label="Saved orientations"><svg class="ico"><use href="#saved"/></svg></button>
          <button aria-label="View manager"><svg class="ico"><use href="#views"/></svg></button>
          <button class="more" aria-label="Datum display"><svg class="ico"><use href="#datumdisp"/></svg></button>
          <button class="pressed" aria-label="Annotation display"><svg class="ico"><use href="#annot"/></svg></button>
          <button aria-label="Spin center"><svg class="ico"><use href="#spin"/></svg></button>
          <i class="grip"></i>
        </div>
        <svg class="model" viewBox="18 64 540 560" role="img" aria-label="Long socket head bolt">
          <g transform="scale(.3635 .4082)">
            <path class="body" d="M652 400L777 1440V1465C800 1490 830 1493 860 1493C900 1490 935 1470 942 1440L820 390Z"/>
            <g class="edges">
              <path class="side" d="M654 415L777 1440M822 400L941 1430"/>
              <path d="M777 1442C800 1398 925 1398 941 1430V1448C930 1475 895 1493 855 1493C820 1493 790 1480 777 1465Z"/>
              <ellipse cx="865" cy="1457" rx="73" ry="33" transform="rotate(-4 865 1457)"/>
            </g>
            <g transform="translate(583 202) scale(.557 .553) translate(-488 -235)"><use href="#bolt-head" x="480" y="225" width="530" height="430"/></g>
          </g>
        </svg>
        <p class="instance">Instance:BOLT_26</p>
      </div>
    </div>

    <div class="status">
      <button class="sbtn pressed" aria-label="Navigator"><svg width="28" height="34"><use href="#t-tree"/></svg></button>
      <button class="sbtn" aria-label="Browser"><svg width="32" height="36"><use href="#globe"/></svg></button>
      <p class="message">BOLT_26 regeneration completed successfully.</p>
      <span class="cell"></span>
      <span class="cell"><svg width="50" height="24"><use href="#lights"/></svg></span>
      <span class="cell flag"><svg width="22" height="32"><use href="#flag"/></svg></span>
      <span class="cell find"><button aria-label="Find"><svg width="32" height="30"><use href="#binoc"/></svg></button></span>
      <span class="cell picked">1 selected</span>
      <span class="filter"><select aria-label="Selection filter"><option>Smart</option></select><span class="arrow"><svg class="caret"><use href="#caret"/></svg></span></span>
    </div>
  </section>

  <h1>STEPS</h1>
  <ol class="steps">
    <li><span>Sketch on the one side of center line.</span></li>
    <li><span>By using the revolve tool, revolve it about the selected center line.</span></li>
    <li><span>Then sketch on the top surface of the bolt head. Take this shape directly from the palate tool and place on the surface.</span></li>
  </ol>
  </main>
  <footer>19</footer>
</div>
</body>
</html>
```
FILE: styles.css
```css
* { box-sizing: border-box; }
body { margin: 0; background: #fff; color: #000; }
svg { display: block; flex: none; }
button {
  margin: 0; padding: 0; border: 0; background: none;
  font: inherit; color: inherit;
}
.sprite { position: absolute; }

/* Document text */
.page {
  padding: 122px 121px 120px;
  font: 32px/40px Lato, Carlito, sans-serif;
}
.running-head {
  display: flex; justify-content: space-between;
  height: 43px; padding-right: 45px;
}
.author { font-size: 34px; }
h1 { margin: 33px 0 31px; font: inherit; }
.steps {
  margin: 0; padding: 0 0 0 241px;
  list-style: none; counter-reset: step;
  font-size: 34px; line-height: 49px;
}
.steps li {
  display: grid; grid-template-columns: 60px 1fr;
  counter-increment: step; text-align: justify;
}
.steps li::before { content: counter(step, lower-alpha) "."; }
footer { text-align: right; }

/* Application window */
.app {
  border-right: 2px solid #8f8f94; border-bottom: 2px solid #5c5c62;
  background: #fcfcfe;
  color: #4a4a50;
  font: 20px/26px "Liberation Sans", Arial, sans-serif;
}
.app.second {
  margin-top: 32px; padding-top: 3px;
  border-right: 5px solid #8f8f94; border-bottom-color: #65564f;
}
.caret { width: 14px; height: 8px; }
.ico { width: 32px; height: 32px; }
.axis-letter { font: bold 13px "Liberation Sans", Arial, sans-serif; fill: #444; }

/* Ribbon */
.ribbon {
  display: grid;
  grid-template-columns: 207fr 121fr 240fr 270fr 297fr 230fr 164fr 150fr 116fr;
  margin: 0 7px 0 2px;
  border: 2px solid #d0d0d3; border-right-width: 1px;
}
.group { min-width: 0; border-right: 2px solid #dcdcdf; }
.group:last-child { border-right: 0; }
.tools {
  display: flex; justify-content: center; gap: 15px;
  height: 147px; padding-top: 3px;
}
.tools.start { justify-content: flex-start; padding-left: 5px; }
.title {
  display: flex; align-items: center; justify-content: center; gap: 9px;
  width: 100%; height: 45px;
  border-top: 3px solid #d8d8db; background: #efeff1;
}
.big {
  display: flex; flex-direction: column; align-items: center;
  height: 140px; padding-top: 8px;
}
.big.wide { width: 120px; }
.big.hover {
  border: 2px solid #d0d0d3; padding-top: 6px;
  background: linear-gradient(#fff 74px, #cfcfd2 74px, #cfcfd2 76px, #f3f3f5 76px, #e3e3e6);
}
.big .art { width: 60px; height: 60px; margin-bottom: 13px; }
.big .caret { margin-top: 9px; }
.stack { display: grid; grid-template-rows: repeat(3, 47px); justify-items: start; }
.stack.three { grid-template-columns: repeat(3, 32px); column-gap: 13px; }
.small { display: flex; align-items: center; gap: 6px; }
.small .caret { margin-left: 6px; }
.tight { margin-left: -8px; }
.off .caret { opacity: .6; }

/* Navigator */
.workspace { display: flex; }
.navigator { flex: none; width: 437px; padding: 26px 0 22px 1px; }
.second .navigator { padding-top: 24px; }
.tabs { display: flex; }
.tab {
  display: grid; place-items: center;
  width: 58px; height: 56px; margin-right: -1px;
  border: 2px solid #d0d0d3; border-radius: 3px 3px 0 0;
  background: #efeff1;
}
.tab.active { position: relative; border-bottom-color: #fcfcfe; background: #fdfdff; }
.panel {
  margin-top: -2px;
  border: 2px solid #d0d0d3; border-right: 5px solid #cbcbce; border-bottom: 3px solid #cbcbce;
  min-height: 604px;
}
.panel-head {
  display: flex; align-items: center; gap: 20px;
  height: 57px; padding-left: 39px;
  border-bottom: 2px solid #d0d0d3;
}
.panel-head h2 { margin: 0 38px 0 0; font-size: 22px; white-space: nowrap; }
.drop { display: flex; align-items: center; gap: 17px; }
.tree { margin: 0; padding: 10px 0 0; list-style: none; }
.tree li { display: flex; align-items: center; height: 38px; padding-left: 58px; }
.tree .node { width: 28px; height: 28px; margin-right: 8px; }
.tree .expand { width: 14px; height: 16px; margin: 0 14px 0 -28px; }
.tree span { height: 38px; padding: 0 4px 0 3px; line-height: 38px; }
.tree .root { padding-left: 20px; font-size: 19px; }
.tree .datum { font-size: 19px; }
.tree .hidden-item { color: #c3c3c6; }
.tree .selected span { background: #b3e3fc; color: #333; }

/* Graphics area */
.viewport {
  flex: 1; display: flex; flex-direction: column; align-items: center;
  padding: 14px 7px 0 0;
}
.viewbar { display: flex; width: 540px; height: 52px; border: 2px solid #d3d3d6; background: #fff; }
.viewbar button {
  position: relative; flex: 1; display: grid; place-items: center;
  border-right: 2px solid #d3d3d6;
}
.viewbar .grip { width: 9px; background: #efeff1; border-right: 2px solid #d3d3d6; }
.viewbar .grip:last-child { border-right: 0; }
.viewbar .pressed {
  border: 2px solid #bbb; border-top: 4px solid #9c9c9c;
  background: linear-gradient(#ddd, #f0f0f0);
}
.more::after {
  content: ""; position: absolute; right: 1px; bottom: 4px;
  border: 3px solid; border-color: transparent #666 #666 transparent;
}
.model { width: 540px; height: 560px; }
.body { fill: url(#g-shaft); }
.edges { fill: none; stroke: #2fc048; stroke-width: 2; }
.edges * { vector-effect: non-scaling-stroke; }
.edges .side { stroke-dasharray: 15 2; }
.instance {
  align-self: flex-start; margin: auto 0 2px; padding-left: 12px;
  font-size: 13px; line-height: 22px; color: #666;
}

/* Status bar */
.status {
  display: flex; align-items: center;
  height: 68px; padding: 0 34px 0 5px;
  border-top: 3px solid #8f8f94; border-bottom: 6px solid #8f8f94;
  background: #efeff2;
}
.sbtn {
  display: grid; place-items: center;
  width: 42px; height: 42px; margin-right: 8px;
  border: 2px solid #d3d3d6; background: #fafafa;
}
.sbtn.pressed { border-color: #c3c3c6; border-top: 4px solid #999; background: linear-gradient(#ddd, #f2f2f2); }
.message {
  flex: 1; display: flex; align-items: center; gap: 10px;
  height: 42px; margin: 0 0 0 9px; padding-left: 12px;
  border-left: 2px solid #dcdcdf;
  font-size: 21px;
}
.message::before { content: ""; width: 10px; height: 10px; border-radius: 50%; background: #1d6585; }
.cell {
  display: flex; align-items: center; justify-content: center;
  width: 69px; height: 46px; border-left: 2px solid #dcdcdf;
}
.cell.flag { width: 78px; justify-content: flex-start; padding-left: 12px; }
.cell.find { width: 87px; }
.cell.find button {
  display: grid; place-items: center;
  width: 75px; height: 42px;
  border: 2px solid #c9c9cc; border-radius: 4px; background: #f8f8fa;
}
.cell.picked { width: 186px; justify-content: flex-start; padding-left: 7px; }
.filter { display: flex; width: 287px; height: 39px; border: 2px solid #cfcfd2; background: #fcfcfe; }
.filter select {
  flex: 1; appearance: none; margin: 0; padding: 0 12px;
  border: 0; background: none; font: inherit; color: inherit;
}
.arrow { display: grid; place-items: center; width: 26px; border-left: 2px solid #d3d3d6; background: #f3f3f5; }
```
